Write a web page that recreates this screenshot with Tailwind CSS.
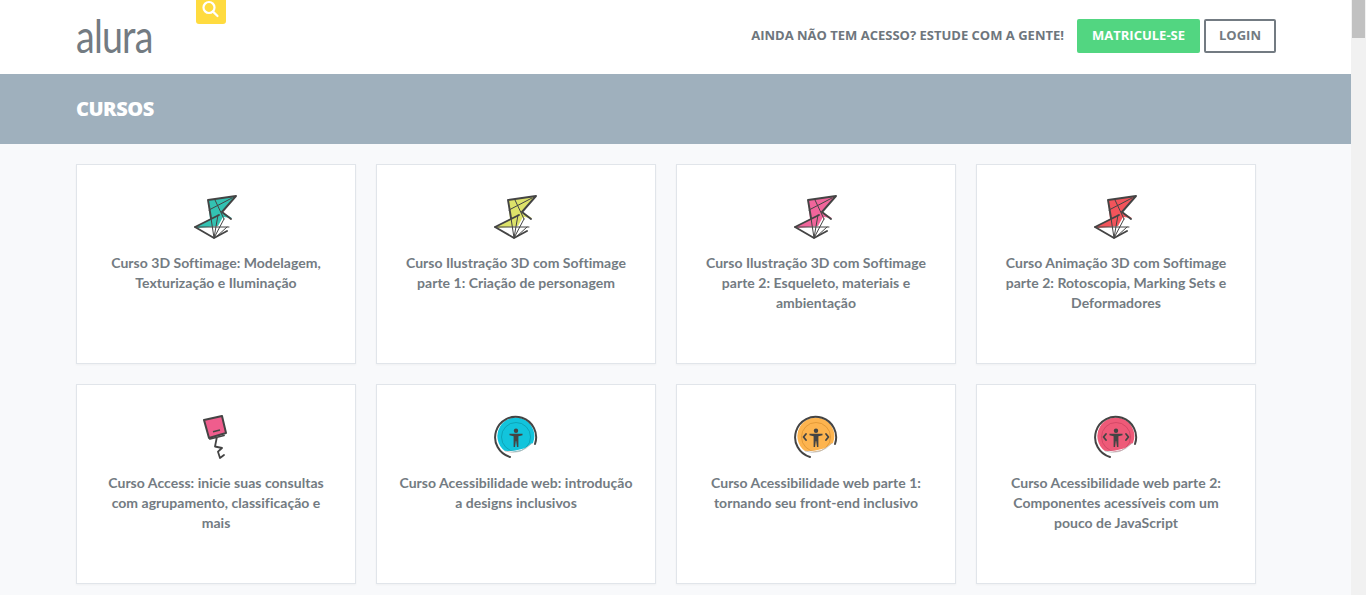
<!DOCTYPE html>
<html lang="pt-BR">
<head>
    <meta charset="UTF-8">
    <title>Cursos | Alura</title>
    <script src="https://cdn.jsdelivr.net/npm/@tailwindcss/browser@4"></script>
</head>
<body class="h-[595px] overflow-hidden flex bg-[#f8f9fb] font-['Lato',sans-serif]">
    <svg width="0" height="0" class="absolute">
        <defs>
            <g id="kite-lines" fill="none" stroke="#444" stroke-linecap="round" stroke-linejoin="round">
                <path d="M17 23 L14 5 L42 1 L28 17 L37 24 M1 32 L25 20 M1 32 L20 43 L33 36" stroke-width="1.9"></path>
                <path d="M15 15 L38 3 M21 5 L30 24 M1 32 L35 32 M17 23 L20 43 L24 20 M20 43 L30 24 M21 43 L33 32" stroke-width="1"></path>
            </g>
            <g id="ring" fill="none">
                <path d="M11 36 Q26 41 38 28" stroke="#bbb" stroke-width="0.8"></path>
                <path d="M41 29 A20.5 20.5 0 1 0 16 42" stroke="#444" stroke-width="2" stroke-linecap="round"></path>
            </g>
            <g id="person">
                <circle cx="22" cy="15.7" r="2.2" fill="#444"></circle>
                <path d="M15.5 18.8 L28.5 18.8 L28.5 20.2 L24.4 21.2 L24.4 32 L23 32 L22.2 26 L21.8 26 L21 32 L19.6 32 L19.6 21.2 L15.5 20.2 Z" fill="#444"></path>
            </g>
            <path id="chevrons" d="M12 19 L9.5 22 L12 25 M32 19 L34.5 22 L32 25" fill="none" stroke="#444" stroke-width="1.8" stroke-linecap="round" stroke-linejoin="round"></path>
        </defs>
    </svg>

    <div class="w-[1351px] shrink-0 h-[595px] overflow-hidden">
        <!-- Header -->
        <header class="h-[74px] bg-white pl-[76px] pr-[75px] flex items-start justify-between">
            <div class="flex items-start">
                <div class="w-[120px]">
                    <span class="block mt-[7px] origin-left scale-x-[.8] text-[47px] leading-[56px] tracking-[-1px] font-normal text-[#737b82]">alura</span>
                </div>
                <div class="w-[30px] h-[24px] bg-[#ffdb3f] rounded-b-[3px] flex items-start justify-center">
                    <svg width="20" height="20" viewBox="0 0 20 20" fill="none" stroke="white" stroke-width="2.2" stroke-linecap="round">
                        <circle cx="8" cy="7.5" r="5.5"></circle>
                        <path d="M12 11.6 L16.5 16"></path>
                    </svg>
                </div>
            </div>
            <div class="flex items-center mt-[19px] font-['Open_Sans',sans-serif] font-bold text-[13px]">
                <span class="text-[#6e767d] mr-[13px]">AINDA NÃO TEM ACESSO? ESTUDE COM A GENTE!</span>
                <a class="h-[34px] w-[123px] bg-[#52d681] text-white rounded-[2px] flex items-center justify-center">MATRICULE-SE</a>
                <a class="ml-[4px] h-[34px] w-[72px] border-2 border-[#737b82] text-[#737b82] rounded-[2px] flex items-center justify-center">LOGIN</a>
            </div>
        </header>

        <!-- Title band -->
        <div class="h-[70px] bg-[#9fb0bd] pl-[76px] flex items-center">
            <h1 class="text-white text-[20px] tracking-[-0.5px] font-extrabold font-['Open_Sans',sans-serif]">CURSOS</h1>
        </div>

        <!-- Course cards -->
        <div class="pl-[76px] pt-[20px] grid grid-cols-[repeat(4,280px)] gap-5">
            <a class="h-[200px] bg-white border border-[#e1e5ea] shadow-[0_1px_2px_rgba(0,0,0,0.04)] px-[20px] pt-[30px] flex flex-col items-center text-center">
                <svg width="44" height="44" viewBox="0 0 44 44" class="shrink-0">
                    <path d="M14 5 L42 1 L28 17 L38 23 L29 22 L24 31 L4 33 L1 32 L16 24 Z" fill="#33c2b2"></path>
                    <use href="#kite-lines"></use>
                </svg>
                <h2 class="mt-[14px] text-[14px] leading-[20px] tracking-[0.03px] font-bold text-[#737b82]">Curso 3D Softimage: Modelagem, Texturização e Iluminação</h2>
            </a>
            <a class="h-[200px] bg-white border border-[#e1e5ea] shadow-[0_1px_2px_rgba(0,0,0,0.04)] px-[20px] pt-[30px] flex flex-col items-center text-center">
                <svg width="44" height="44" viewBox="0 0 44 44" class="shrink-0">
                    <path d="M14 5 L42 1 L28 17 L38 23 L29 22 L24 31 L4 33 L1 32 L16 24 Z" fill="#dde26a"></path>
                    <use href="#kite-lines"></use>
                </svg>
                <h2 class="mt-[14px] text-[14px] leading-[20px] tracking-[0.03px] font-bold text-[#737b82]">Curso Ilustração 3D com Softimage parte 1: Criação de personagem</h2>
            </a>
            <a class="h-[200px] bg-white border border-[#e1e5ea] shadow-[0_1px_2px_rgba(0,0,0,0.04)] px-[20px] pt-[30px] flex flex-col items-center text-center">
                <svg width="44" height="44" viewBox="0 0 44 44" class="shrink-0">
                    <path d="M14 5 L42 1 L28 17 L38 23 L29 22 L24 31 L4 33 L1 32 L16 24 Z" fill="#f0659b"></path>
                    <use href="#kite-lines"></use>
                </svg>
                <h2 class="mt-[14px] text-[14px] leading-[20px] tracking-[0.03px] font-bold text-[#737b82]">Curso Ilustração 3D com Softimage parte 2: Esqueleto, materiais e ambientação</h2>
            </a>
            <a class="h-[200px] bg-white border border-[#e1e5ea] shadow-[0_1px_2px_rgba(0,0,0,0.04)] px-[20px] pt-[30px] flex flex-col items-center text-center">
                <svg width="44" height="44" viewBox="0 0 44 44" class="shrink-0">
                    <path d="M14 5 L42 1 L28 17 L38 23 L29 22 L24 31 L4 33 L1 32 L16 24 Z" fill="#f2545b"></path>
                    <use href="#kite-lines"></use>
                </svg>
                <h2 class="mt-[14px] text-[14px] leading-[20px] tracking-[0.03px] font-bold text-[#737b82]">Curso Animação 3D com Softimage parte 2: Rotoscopia, Marking Sets e Deformadores</h2>
            </a>
            <a class="h-[200px] bg-white border border-[#e1e5ea] shadow-[0_1px_2px_rgba(0,0,0,0.04)] px-[20px] pt-[30px] flex flex-col items-center text-center">
                <svg width="44" height="44" viewBox="0 0 44 44" fill="none" class="shrink-0">
                    <path d="M10 5 L28 1 L32 18 L15 23 Z" fill="#ef5d8d" stroke="#444" stroke-width="2" stroke-linejoin="round"></path>
                    <path d="M19 16.7 L26 15" stroke="#444" stroke-width="1.4"></path>
                    <path d="M16 24 L30 20.5 M22.7 23 L21 31.5 L28 33 L24 36.7 L26 43 L30 40" stroke="#444" stroke-width="1.8" stroke-linecap="round" stroke-linejoin="round"></path>
                </svg>
                <h2 class="mt-[14px] text-[14px] leading-[20px] tracking-[0.03px] font-bold text-[#737b82]">Curso Access: inicie suas consultas com agrupamento, classificação e mais</h2>
            </a>
            <a class="h-[200px] bg-white border border-[#e1e5ea] shadow-[0_1px_2px_rgba(0,0,0,0.04)] px-[20px] pt-[30px] flex flex-col items-center text-center">
                <svg width="44" height="44" viewBox="0 0 44 44" fill="none" class="shrink-0">
                    <path d="M11 36 A18.5 18.5 0 1 1 39 28 Q28 37 11 36 Z" fill="#12c4dc"></path>
                    <circle cx="22" cy="22" r="14.5" stroke="#0a8ea0" stroke-width="0.6"></circle>
                    <use href="#ring"></use>
                    <use href="#person"></use>
                </svg>
                <h2 class="mt-[14px] text-[14px] leading-[20px] tracking-[0.03px] font-bold text-[#737b82]">Curso Acessibilidade web: introdução a designs inclusivos</h2>
            </a>
            <a class="h-[200px] bg-white border border-[#e1e5ea] shadow-[0_1px_2px_rgba(0,0,0,0.04)] px-[20px] pt-[30px] flex flex-col items-center text-center">
                <svg width="44" height="44" viewBox="0 0 44 44" fill="none" class="shrink-0">
                    <path d="M11 36 A18.5 18.5 0 1 1 39 28 Q28 37 11 36 Z" fill="#fdb44f"></path>
                    <circle cx="22" cy="22" r="14.5" stroke="#d48a28" stroke-width="0.6"></circle>
                    <use href="#ring"></use>
                    <use href="#person"></use>
                    <use href="#chevrons"></use>
                </svg>
                <h2 class="mt-[14px] text-[14px] leading-[20px] tracking-[0.03px] font-bold text-[#737b82]">Curso Acessibilidade web parte 1: tornando seu front-end inclusivo</h2>
            </a>
            <a class="h-[200px] bg-white border border-[#e1e5ea] shadow-[0_1px_2px_rgba(0,0,0,0.04)] px-[20px] pt-[30px] flex flex-col items-center text-center">
                <svg width="44" height="44" viewBox="0 0 44 44" fill="none" class="shrink-0">
                    <path d="M11 36 A18.5 18.5 0 1 1 39 28 Q28 37 11 36 Z" fill="#ee5a78"></path>
                    <circle cx="22" cy="22" r="14.5" stroke="#c23c5a" stroke-width="0.6"></circle>
                    <use href="#ring"></use>
                    <use href="#person"></use>
                    <use href="#chevrons"></use>
                </svg>
                <h2 class="mt-[14px] text-[14px] leading-[20px] tracking-[0.03px] font-bold text-[#737b82]">Curso Acessibilidade web parte 2: Componentes acessíveis com um pouco de JavaScript</h2>
            </a>
        </div>
    </div>

    <!-- Scrollbar -->
    <div class="w-[15px] shrink-0 h-[595px] bg-[#f1f1f1]">
        <div class="h-[38px] mx-[1px] bg-[#c1c1c1]"></div>
    </div>
</body>
</html>
